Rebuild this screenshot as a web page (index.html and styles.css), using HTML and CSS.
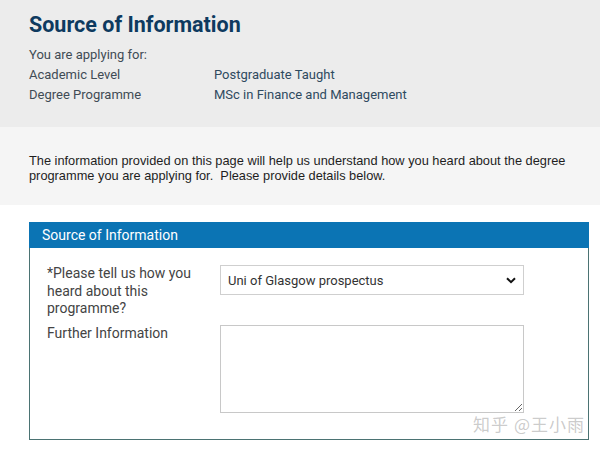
FILE: index.html
```html
<!DOCTYPE html>
<html lang="en">
<head>
<meta charset="utf-8">
<title>Source of Information</title>
<link rel="stylesheet" href="styles.css">
</head>
<body>
<header class="summary">
  <h1 class="title">Source of Information</h1>
  <p class="applying">You are applying for:</p>
  <dl class="facts">
    <dt>Academic Level</dt><dd>Postgraduate Taught</dd>
    <dt>Degree Programme</dt><dd>MSc in Finance and Management</dd>
  </dl>
</header>
<section class="intro">
  <p>The information provided on this page will help us understand how you heard about the degree programme you are applying for.&nbsp; Please provide details below.</p>
</section>
<main class="content">
  <div class="panel">
    <div class="panel-head">Source of Information</div>
    <div class="panel-body">
      <label class="field-label" for="src">*Please tell us how you heard about this programme?</label>
      <div class="select-wrap">
        <select id="src" class="select">
          <option>Uni of Glasgow prospectus</option>
        </select>
        <svg class="chev" width="10" height="7" viewBox="0 0 10 7"><path d="M1 1.2 L5 5.2 L9 1.2" fill="none" stroke="#111" stroke-width="2"/></svg>
      </div>
      <label class="field-label field-label--flush" for="info">Further Information</label>
      <textarea id="info" class="textarea"></textarea>
    </div>
    <div class="watermark">知乎 @王小雨</div>
  </div>
</main>
</body>
</html>
```
FILE: styles.css
```css
html, body {
  margin: 0;
  padding: 0;
  background: #ffffff;
}
body {
  font-family: Roboto, "Liberation Sans", Arial, sans-serif;
  width: 600px;
  height: 451px;
  overflow: hidden;
}
.summary {
  background: #ececec;
  padding: 10px 0 0 29px;
  height: 117px;
}
.title {
  margin: 0;
  font-size: 21.5px;
  line-height: 30px;
  font-weight: 700;
  color: #0e3a5f;
}
.applying {
  margin: 5px 0 0;
  font-size: 13px;
  line-height: 20px;
  color: #3f4b55;
}
.facts {
  margin: 0;
  display: grid;
  grid-template-columns: 185px auto;
  font-size: 13px;
  line-height: 20px;
}
.facts dt { color: #3f4b55; }
.facts dd { margin: 0; color: #2f4a5f; }
.intro {
  background: #f5f5f5;
  height: 78px;
  padding: 0 0 0 29px;
  display: flex;
  align-items: center;
}
.intro p {
  margin: 3px 0 0;
  font-family: "Liberation Sans", Arial, sans-serif;
  font-size: 12.8px;
  line-height: 15px;
  color: #1e1e1e;
}
.content {
  padding: 17px 11px 0 29px;
}
.panel {
  position: relative;
  border: 1px solid #4b7373;
  border-top: 0;
  height: 218px;
  box-sizing: border-box;
}
.panel-head {
  background: #0b74b4;
  color: #ffffff;
  font-size: 14px;
  line-height: 26px;
  height: 26px;
  padding-left: 13px;
  margin: 0 -1px;
}
.panel-body {
  display: grid;
  grid-template-columns: 173px 304px;
  row-gap: 7px;
  padding: 15px 0 0 17px;
}
.field-label {
  font-size: 14px;
  line-height: 17.5px;
  color: #444444;
  padding: 2px 10px 0 0;
}
.field-label--flush {
  padding-top: 0;
}
.select-wrap {
  position: relative;
  margin-top: 2px;
  height: 30px;
}
.select {
  appearance: none;
  -webkit-appearance: none;
  width: 304px;
  height: 30px;
  box-sizing: border-box;
  border: 1px solid #cfcfcf;
  background: #ffffff;
  font-family: Roboto, "Liberation Sans", Arial, sans-serif;
  font-size: 13px;
  color: #333333;
  padding: 0 0 0 7px;
  border-radius: 0;
}
.chev {
  position: absolute;
  right: 8px;
  top: 12px;
}
.textarea {
  width: 304px;
  height: 88px;
  box-sizing: border-box;
  border: 1px solid #c8c8c8;
  border-radius: 0;
  margin: 0;
  display: block;
}
.watermark {
  position: absolute;
  right: 3px;
  bottom: 3px;
  font-family: "Noto Sans CJK SC", sans-serif;
  font-size: 17px;
  color: rgba(160, 160, 160, 0.55);
  letter-spacing: 1px;
}
```
